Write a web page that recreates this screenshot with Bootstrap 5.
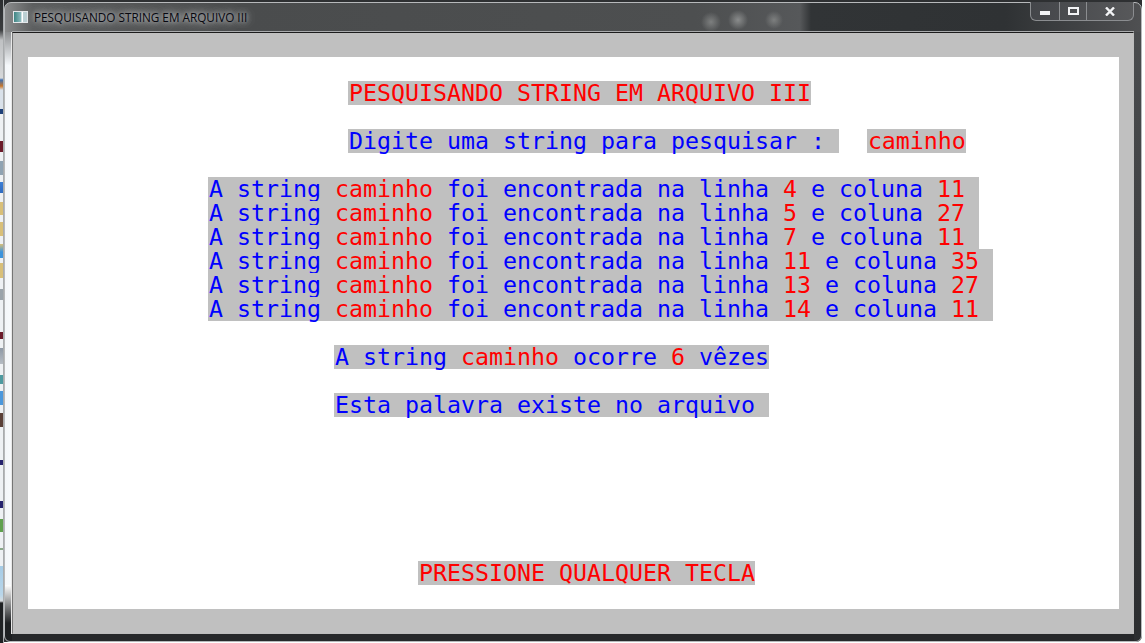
<!DOCTYPE html>
<html lang="pt">
<head>
<meta charset="utf-8">
<title>PESQUISANDO STRING EM ARQUIVO III</title>
<link rel="stylesheet" href="https://cdn.jsdelivr.net/npm/bootstrap@5.3.0/dist/css/bootstrap.min.css">
<style>
html,body{margin:0;height:643px;overflow:hidden;background:#fff}
.shell{width:1142px;height:642px;background:#2e3032;border-bottom-right-radius:6px}
.desk-strip{width:4px;flex:none;height:643px;border-right:1px solid #a9acae;
 background:linear-gradient(180deg,#2c2e30 0,#3a3c3e 30px,#bfc1c3 40px,#d6d8da 78px,
 #3f6fb0 80px,#c8762a 86px,#d9e1ea 90px,#d9e1ea 109px,#1d3f78 109px,#1d3f78 114px,#eef1f4 114px,
 #eef1f4 141px,#6b1a2a 141px,#6b1a2a 152px,#eef1f4 152px,#eef1f4 161px,#8fa3b3 161px,#8fa3b3 175px,#eef1f4 175px,
 #eef1f4 182px,#3c7fd6 182px,#2f6bc0 193px,#eef1f4 193px,#eef1f4 202px,#d8bf78 202px,#d8bf78 215px,#eef1f4 215px,
 #eef1f4 222px,#d8bf78 222px,#d8bf78 236px,#eef1f4 236px,#eef1f4 244px,#d8bf78 244px,#3b93dc 252px,#3b93dc 258px,#eef1f4 258px,
 #eef1f4 263px,#d8bf78 263px,#d8bf78 278px,#eef1f4 278px,#eef1f4 289px,#9aa3aa 289px,#9aa3aa 300px,#eef1f4 300px,
 #eef1f4 332px,#6b1a2a 332px,#6b1a2a 339px,#eef1f4 339px,#eef1f4 348px,#8d98a5 348px,#b5bcc4 364px,#eef1f4 364px,
 #eef1f4 375px,#4d9aa0 375px,#4d9aa0 384px,#eef1f4 384px,#eef1f4 391px,#4a97dc 391px,#4a97dc 405px,#eef1f4 405px,
 #eef1f4 413px,#5a4038 413px,#5a4038 427px,#eef1f4 427px,#eef1f4 460px,#26236e 460px,#26236e 465px,#eef1f4 465px,
 #eef1f4 501px,#26236e 501px,#26236e 508px,#eef1f4 508px,#eef1f4 519px,#5fa04e 519px,#5fa04e 532px,#eef1f4 532px,
 #eef1f4 548px,#8aa88a 548px,#8aa88a 550px,#eef1f4 550px,#eef1f4 566px,#a5cbe6 566px,#b9d6ea 595px,#d8dcdf 601px,#1f2123 603px,#1f2123 643px)}
.glass{flex:1;margin-top:2px;height:640px;padding:0 7px 7px;border:1px solid #b7b9bb;border-radius:7px 7px 6px 6px;
 background:
  radial-gradient(circle 10px at 706px 19px,#7d7f7f,transparent),
  radial-gradient(circle 10px at 733px 17px,#8a8c8c,transparent),
  radial-gradient(circle 9px at 769px 17px,#7d7f7f,transparent),
  linear-gradient(90deg,#f4f7fa 0,#f8fafc 7px,transparent 7px) 0 62px/7px 520px no-repeat,
  linear-gradient(180deg,#fff 0,#1e2022 100%) 0 582px/7px 38px no-repeat,
  linear-gradient(180deg,#8e9092 0,#f4f7fa 100%) 0 29px/7px 33px no-repeat,
  linear-gradient(90deg,#1e2022,#1e2022) 0 620px/7px 20px no-repeat,
  linear-gradient(180deg,#4a4c4e 0,#2a2c2e 100%) 100% 29px/7px 100% no-repeat,
  linear-gradient(90deg,#26282a,#26282a) 0 100%/100% 7px no-repeat,
  linear-gradient(90deg,#8b8c8d 0,#5c5e5f 28px,#4a4c4d 240px,#4d4f50 690px,#56585a 795px,#313436 806px,#2f3234 1000px,#4f5052 1136px)}
.title-bar{height:29px;flex:none}
.win-logo{width:15px;height:12px;margin-left:1px;margin-top:-1px;flex:none;border:1px solid #e4e7ea;background:linear-gradient(90deg,#3f8583 0,#8fbcc0 55%,#fff 60%,#fff 72%,#bcd0d4 72%)}
.title-text{font:11.75px/16px "Open Sans","Liberation Sans",sans-serif;color:#07070f;margin-top:-2px;margin-left:-2px;text-shadow:0 0 4px #c5c7c8,0 0 8px #b5b7b8,0 0 12px #a5a7a8;white-space:nowrap}
.caption-set{height:19px;margin-top:-1px;border:1px solid #8b8d90;border-top:0;border-radius:0 0 6px 6px;background:linear-gradient(90deg,#44464a,#57585a)}
.cap-btn{display:flex;align-items:center;justify-content:center;height:18px;border-right:1px solid #8b8d90}
.cap-btn:last-child{border-right:0}
.cap-min{width:29px}.cap-max{width:27px}.cap-close{width:46px}
.client-box{height:602px;flex:none;background:#c0c0c0;padding:24px 14px 24px 15px;border:1px solid #bdbdbd;border-top-color:#1c1c1c;border-left-color:#757575;box-shadow:0 -1px 0 #a9abad,-1px 0 0 #e8e8e8}
.screen{height:552px;background:#fff;padding-left:12px;font:23.26px/24px "DejaVu Sans Mono",monospace;overflow:hidden;white-space:pre}
.tline{height:24px}
.g{display:inline-block;height:24px;line-height:23px;background:#c0c0c0;padding-left:1px;vertical-align:top}
.b{color:#00f}.r{color:#f00}
</style>
</head>
<body>
<div class="shell d-flex">
 <div class="desk-strip"></div>
 <div class="glass d-flex flex-column">
  <div class="title-bar d-flex align-items-center gap-2">
   <span class="win-logo"></span><span class="title-text">PESQUISANDO STRING EM ARQUIVO III</span>
   <div class="caption-set d-flex ms-auto align-self-start">
    <div class="cap-btn cap-min"><svg width="10" height="4" viewBox="0 0 10 4" class="mt-1"><rect width="10" height="4" fill="#f2f3f5"/></svg></div>
    <div class="cap-btn cap-max"><svg width="11" height="8" viewBox="0 0 11 8"><rect x="1" y="1" width="9" height="6" fill="none" stroke="#f2f3f5" stroke-width="2"/></svg></div>
    <div class="cap-btn cap-close"><svg width="10" height="9" viewBox="0 0 10 9"><path d="M1 0.5 9 8.5M9 0.5 1 8.5" stroke="#f2f3f5" stroke-width="2.4" fill="none"/></svg></div>
   </div>
  </div>
  <div class="client-box">
   <div class="screen"><div class="tline"></div><div class="tline">                      <span class="g r">PESQUISANDO STRING EM ARQUIVO III</span></div><div class="tline"></div><div class="tline">                      <span class="g b">Digite uma string para pesquisar : </span>  <span class="g r">caminho</span></div><div class="tline"></div><div class="tline">            <span class="g b">A string <span class="r">caminho</span> foi encontrada na linha <span class="r">4</span> e coluna <span class="r">11</span> </span></div><div class="tline">            <span class="g b">A string <span class="r">caminho</span> foi encontrada na linha <span class="r">5</span> e coluna <span class="r">27</span> </span></div><div class="tline">            <span class="g b">A string <span class="r">caminho</span> foi encontrada na linha <span class="r">7</span> e coluna <span class="r">11</span> </span></div><div class="tline">            <span class="g b">A string <span class="r">caminho</span> foi encontrada na linha <span class="r">11</span> e coluna <span class="r">35</span> </span></div><div class="tline">            <span class="g b">A string <span class="r">caminho</span> foi encontrada na linha <span class="r">13</span> e coluna <span class="r">27</span> </span></div><div class="tline">            <span class="g b">A string <span class="r">caminho</span> foi encontrada na linha <span class="r">14</span> e coluna <span class="r">11</span> </span></div><div class="tline"></div><div class="tline">                     <span class="g b">A string <span class="r">caminho</span> ocorre <span class="r">6</span> vêzes</span></div><div class="tline"></div><div class="tline">                     <span class="g b">Esta palavra existe no arquivo </span></div><div class="tline"></div><div class="tline"></div><div class="tline"></div><div class="tline"></div><div class="tline"></div><div class="tline"></div><div class="tline">                           <span class="g r">PRESSIONE QUALQUER TECLA</span></div><div class="tline"></div></div>
  </div>
 </div>
</div>
</body>
</html>
